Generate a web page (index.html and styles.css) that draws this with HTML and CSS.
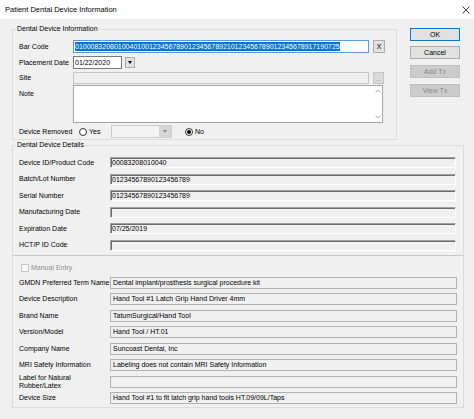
FILE: index.html
```html
<!DOCTYPE html>
<html>
<head>
<meta charset="utf-8">
<link rel="stylesheet" href="styles.css">
</head>
<body>
<div class="titlebar">
  <span class="title">Patient Dental Device Information</span>
  <svg class="close" viewBox="0 0 9 9"><path d="M0.5 0.5L8.5 8.5M8.5 0.5L0.5 8.5" stroke="#000" stroke-width="0.8" fill="none"/></svg>
</div>
<div class="top">
  <fieldset class="group g1">
    <legend>Dental Device Information</legend>
    <div class="g1-body">
      <div class="row r-bar">
        <span class="lbl">Bar Code</span>
        <div class="input bar-input"><span class="sel">01000832080100401001234567890123456789210123456789012345678917190725</span></div>
        <div class="xbtn">X</div>
      </div>
      <div class="row r-date">
        <span class="lbl">Placement Date</span>
        <div class="input date-input">01/22/2020</div>
        <div class="dd-btn"><span class="tri"></span></div>
      </div>
      <div class="row r-site">
        <span class="lbl">Site</span>
        <div class="input site-input"></div>
        <div class="ell-btn">...</div>
      </div>
      <div class="row r-note">
        <span class="lbl note-lbl">Note</span>
        <div class="input note-input">
          <div class="scroll">
            <svg viewBox="0 0 6 4" class="chev"><path d="M0.5 3.5L3 1L5.5 3.5" stroke="#a6a6a6" fill="none" stroke-width="0.9"/></svg>
            <svg viewBox="0 0 6 4" class="chev"><path d="M0.5 0.5L3 3L5.5 0.5" stroke="#a6a6a6" fill="none" stroke-width="0.9"/></svg>
          </div>
        </div>
      </div>
      <div class="row r-removed">
        <span class="lbl lbl-removed">Device Removed</span>
        <div class="radio-opt yes"><span class="radio"></span><span>Yes</span></div>
        <div class="combo"><div class="combo-btn"><span class="tri grey"></span></div></div>
        <div class="radio-opt no"><span class="radio on"><span class="dot"></span></span><span>No</span></div>
      </div>
    </div>
  </fieldset>
  <div class="buttons">
    <div class="btn default">OK</div>
    <div class="btn cancel">Cancel</div>
    <div class="btn disabled add">Add Tx</div>
    <div class="btn disabled view">View Tx</div>
  </div>
</div>
<fieldset class="group g2">
  <legend>Dental Device Details</legend>
  <div class="g2-sunken">
    <span>Device ID/Product Code</span><div class="sunken">00083208010040</div>
    <span>Batch/Lot Number</span><div class="sunken">01234567890123456789</div>
    <span>Serial Number</span><div class="sunken">01234567890123456789</div>
    <span>Manufacturing Date</span><div class="sunken"></div>
    <span>Expiration Date</span><div class="sunken">07/25/2019</div>
    <span>HCT/P ID Code</span><div class="sunken"></div>
  </div>
  <div class="sep"></div>
  <div class="manual"><span class="cb"></span><span>Manual Entry</span></div>
  <div class="g2-box">
    <span>GMDN Preferred Term Name</span><div class="boxf">Dental implant/prosthesis surgical procedure kit</div>
    <span>Device Description</span><div class="boxf">Hand Tool #1 Latch Grip Hand Driver 4mm</div>
    <span>Brand Name</span><div class="boxf">TatumSurgical/Hand Tool</div>
    <span>Version/Model</span><div class="boxf">Hand Tool / HT.01</div>
    <span>Company Name</span><div class="boxf">Suncoast Dental, Inc</div>
    <span>MRI Safety Information</span><div class="boxf">Labeling does not contain MRI Safety Information</div>
    <span class="two">Label for Natural<br>Rubber/Latex</span><div class="boxf"></div>
    <span>Device Size</span><div class="boxf">Hand Tool #1 to fit latch grip hand tools HT.09/09L/Taps</div>
  </div>
</fieldset>
</body>
</html>
```
FILE: styles.css
```css
* { box-sizing: border-box; }
body {
  margin: 0;
  width: 474px;
  height: 419px;
  overflow: hidden;
  background: #f0f0f0;
  font-family: "Liberation Sans", Arial, sans-serif;
  font-size: 7px;
  line-height: 8px;
  color: #000;
}
.titlebar {
  height: 19px;
  background: #fff;
  display: flex;
  align-items: center;
  justify-content: space-between;
  padding: 0 4px 0 5px;
}
.title { font-size: 7.5px; }
.close { width: 8px; height: 8px; }

.top {
  display: flex;
  align-items: flex-start;
  margin-top: 6px;
}
.group {
  margin: 0;
  padding: 0;
  border: 1px solid #dcdcdc;
  min-width: 0;
}
.group legend {
  padding: 0 1px;
  margin-left: 3px;
  line-height: 8px;
}
.g1 { margin-left: 12px; width: 385px; }
.g1-body { padding: 7px 0 1px 6px; }

.row { display: flex; align-items: center; }
.lbl { width: 54px; flex: none; white-space: nowrap; }
.input { border: 1px solid #7a7a7a; background: #fff; flex: none; }

.r-bar { height: 13px; }
.bar-input {
  width: 296px;
  height: 13px;
  border-color: #5a9be0;
  padding: 0 1px;
  display: flex;
  align-items: center;
  overflow: hidden;
}
.sel {
  background: #0078d7;
  color: #fff;
  line-height: 9px;
  white-space: nowrap;
}
.xbtn {
  margin-left: 4px;
  width: 12px;
  height: 13px;
  border: 1px solid #adadad;
  background: #e1e1e1;
  display: flex;
  align-items: center;
  justify-content: center;
  font-size: 7px;
}

.r-date { height: 13px; margin-top: 3px; }
.date-input {
  width: 49px;
  height: 13px;
  padding-left: 1px;
  line-height: 11px;
}
.dd-btn {
  margin-left: 3px;
  width: 10px;
  height: 11px;
  border: 1px solid #adadad;
  background: #e1e1e1;
  display: flex;
  align-items: center;
  justify-content: center;
}
.tri {
  width: 0;
  height: 0;
  border-left: 2.5px solid transparent;
  border-right: 2.5px solid transparent;
  border-top: 3px solid #000;
}
.tri.grey { border-top-color: #8a8a8a; }

.r-site { height: 12px; margin-top: 3px; }
.site-input {
  width: 296px;
  height: 12px;
  background: #efefef;
  border-color: #c4c4c4;
}
.ell-btn {
  margin-left: 4px;
  width: 11px;
  height: 12px;
  border: 1px solid #c4c4c4;
  background: #dadada;
  color: #8a8a8a;
  display: flex;
  align-items: flex-end;
  justify-content: center;
  line-height: 7px;
  font-size: 6px;
}

.r-note { height: 38px; margin-top: 1px; align-items: flex-start; }
.note-lbl { padding-top: 5px; }
.note-input {
  width: 310px;
  height: 38px;
  border-color: #a5a5a5;
  display: flex;
  justify-content: flex-end;
}
.scroll {
  width: 9px;
  display: flex;
  flex-direction: column;
  justify-content: space-between;
  align-items: center;
  padding: 3px 0 3px;
}
.chev { width: 6px; height: 4px; display: block; }

.r-removed { height: 13px; margin-top: 2px; }
.lbl-removed { width: 60px; }
.radio-opt { display: flex; align-items: center; }
.radio-opt.yes { width: 32px; }
.radio-opt.no { margin-left: 13px; }
.radio {
  width: 8px;
  height: 8px;
  border-radius: 50%;
  border: 1px solid #333;
  background: #fff;
  margin-right: 2px;
  display: flex;
  align-items: center;
  justify-content: center;
}
.dot {
  width: 4px;
  height: 4px;
  border-radius: 50%;
  background: #000;
}
.combo {
  width: 61px;
  height: 13px;
  border: 1px solid #cccccc;
  background: #f4f4f4;
  display: flex;
  justify-content: flex-end;
}
.combo-btn {
  width: 12px;
  background: #d6d6d6;
  display: flex;
  align-items: center;
  justify-content: center;
}

.buttons {
  margin-left: 13px;
  width: 50px;
  padding-top: 3px;
  display: flex;
  flex-direction: column;
}
.btn {
  height: 13px;
  border: 1px solid #adadad;
  background: #e1e1e1;
  display: flex;
  align-items: center;
  justify-content: center;
}
.btn.default { border-color: #0078d7; box-shadow: inset 0 0 0 1px #e1e1e1; }
.btn.cancel { margin-top: 5px; }
.btn.add, .btn.view { margin-top: 6px; }
.btn.disabled { background: #cccccc; border-color: #bfbfbf; color: #8a8a8a; }

.g2 { margin: 1px 0 0 12px; width: 452px; }
.g2-sunken {
  padding: 8px 0 0 6px;
  display: grid;
  grid-template-columns: 91px 346px;
  grid-auto-rows: 11px;
  row-gap: 5.6px;
  align-items: center;
}
.sunken {
  height: 11px;
  border: 1px solid;
  border-color: #a0a0a0 #ffffff #ffffff #a0a0a0;
  box-shadow: inset 1px 1px 0 #6d6d6d;
  padding-left: 1px;
  line-height: 10px;
  white-space: nowrap;
}
.sep {
  margin-top: 4px;
  height: 1px;
  background: #c8c8c8;
}
.manual {
  margin-top: 8px;
  padding-left: 8px;
  height: 8px;
  display: flex;
  align-items: center;
  color: #8d8d8d;
}
.cb {
  width: 8px;
  height: 8px;
  border: 1px solid #c5c5c5;
  background: #f7f7f7;
  margin-right: 2px;
}
.g2-box {
  padding: 5px 0 3px 6px;
  display: grid;
  grid-template-columns: 91px 347px;
  grid-auto-rows: 12px;
  row-gap: 4.5px;
  align-items: center;
}
.boxf {
  height: 12px;
  border: 1px solid #b2b2b2;
  background: #f0f0f0;
  padding-left: 2px;
  line-height: 10px;
  white-space: nowrap;
  overflow: hidden;
}
.two { line-height: 8px; }
```
